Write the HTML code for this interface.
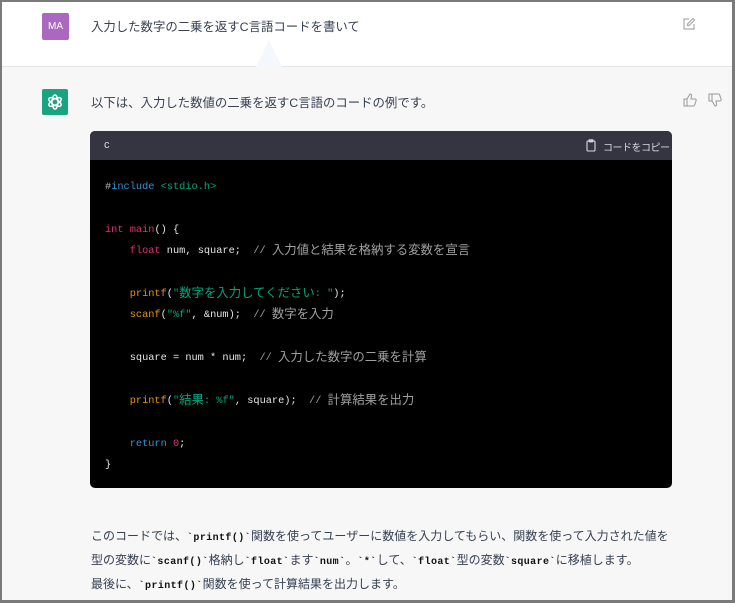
<!DOCTYPE html>
<html><head><meta charset="utf-8"><style>
*{margin:0;padding:0;box-sizing:border-box}
body{width:735px;height:603px;overflow:hidden;background:#fff;font-family:"Liberation Sans","Noto Sans CJK JP",sans-serif;position:relative}
.frame{position:absolute;inset:0;border:2px solid #7a7a7a;border-right-width:3px;border-bottom-width:3px;pointer-events:none;z-index:10}
.top{position:absolute;left:0;top:0;width:735px;height:67px;background:#fff;border-bottom:1px solid #e5e5e5}
.bot{position:absolute;left:0;top:67px;width:735px;height:536px;background:#f7f7f8}
.av{position:absolute;left:42px;top:13px;width:27px;height:27px;background:#ab68c1;color:#fff;font-size:10px;line-height:27px;text-align:center;border-radius:2px}
.gpt{position:absolute;left:42px;top:89px;width:26px;height:26px;background:#19a37e;border-radius:2px}
.t{position:absolute;font-size:12.4px;color:#374151;white-space:nowrap}
.code{position:absolute;left:90px;top:131px;width:582px;height:357px;background:#000;border-radius:5px;overflow:hidden}
.ch{height:29px;background:#343541;color:#d9d9e3;font-size:11px;position:relative}
.pre{position:absolute;left:15px;top:46px;font-family:"Liberation Mono","Noto Sans CJK JP",monospace;font-size:10.3px;line-height:21.4px;color:#e6e6e6;white-space:pre}
.j{font-size:12.4px;line-height:10px;position:relative;top:1px}
.k{color:#df3079}.b{color:#2e95d3}.s{color:#00a67d}.f{color:#e9950c}.c{color:#a0a0a0}.g{color:#b4b4b4}
.p{font-size:12px}
code{font-family:"Liberation Mono",monospace;font-weight:bold;font-size:10px;letter-spacing:0.4px;color:#111}
</style></head><body>
<div class="top"></div><div class="bot"></div>
<div style="position:absolute;left:256px;top:40px;width:0;height:0;border-left:13px solid transparent;border-right:13px solid transparent;border-bottom:27px solid #f4f8fc"></div>
<div class="av">MA</div>
<div class="t" style="left:91px;top:17px">入力した数字の二乗を返すC言語コードを書いて</div>
<svg style="position:absolute;left:682px;top:17px" width="14" height="14" viewBox="0 0 14 14" fill="none" stroke="#aaa" stroke-width="1.2"><path d="M7 2H2v10h10V7"/><path d="M11 1.5l1.5 1.5L7 8.5H5.5V7z"/></svg>
<div class="gpt"><svg width="26" height="26" viewBox="0 0 26 26" fill="none" stroke="#fff" stroke-width="1.4"><g transform="translate(13 13)"><ellipse rx="3" ry="7"/><ellipse rx="3" ry="7" transform="rotate(60)"/><ellipse rx="3" ry="7" transform="rotate(120)"/></g></svg></div>
<div class="t" style="left:91px;top:93px">以下は、入力した数値の二乗を返すC言語のコードの例です。</div>
<svg style="position:absolute;left:683px;top:93px" width="14" height="14" viewBox="0 0 14 14" fill="none" stroke="#999" stroke-width="1"><path d="M1 6h3v7H1zM4 6l3-5c1 0 2 1 1.5 2L8 6h4c1 0 1.5 1 1 2l-1.5 4.5c-.3.5-.7.5-1 .5H4"/></svg>
<svg style="position:absolute;left:708px;top:93px" width="14" height="14" viewBox="0 0 14 14" fill="none" stroke="#999" stroke-width="1"><path d="M1 1h3v7H1zM4 8l3 5c1 0 2-1 1.5-2L8 8h4c1 0 1.5-1 1-2L11.5 1.5C11.2 1 10.8 1 10.5 1H4"/></svg>
<div class="code">
<div class="ch"><span style="position:absolute;left:14px;top:8px">c</span>
<svg style="position:absolute;left:496px;top:8px" width="10" height="13" viewBox="0 0 10 13" fill="none" stroke="#d9d9e3" stroke-width="1.1"><rect x="1" y="2" width="8" height="10" rx="1"/><rect x="3" y="0.8" width="4" height="2" rx=".5"/></svg>
<span style="position:absolute;left:513px;top:8px;font-size:10px;white-space:nowrap;letter-spacing:-0.5px">コードをコピー</span></div>
<div class="pre"><span class="g">#</span><span class="b">include</span> <span class="s">&lt;stdio.h&gt;</span>

<span class="k">int</span> <span class="k">main</span>() {
    <span class="k">float</span> num, square;  <span class="c">// <span class="j">入力値と結果を格納する変数を宣言</span></span>

    <span class="f">printf</span>(<span class="s">"<span class="j">数字を入力してください</span>: "</span>);
    <span class="f">scanf</span>(<span class="s">"%f"</span>, &amp;num);  <span class="c">// <span class="j">数字を入力</span></span>

    square = num * num;  <span class="c">// <span class="j">入力した数字の二乗を計算</span></span>

    <span class="f">printf</span>(<span class="s">"<span class="j">結果</span>: %f"</span>, square);  <span class="c">// <span class="j">計算結果を出力</span></span>

    <span class="b">return</span> <span class="k">0</span>;
}</div>
</div>
<div class="t p" style="left:91px;top:527px">このコードでは、<code>`printf()`</code>関数を使ってユーザーに数値を入力してもらい、関数を使って入力された値を</div>
<div class="t p" style="left:91px;top:551px">型の変数に<code>`scanf()`</code>格納し<code>`float`</code>ます<code>`num`</code>。<code>`*`</code>して、<code>`float`</code>型の変数<code>`square`</code>に移植します。</div>
<div class="t p" style="left:91px;top:575px">最後に、<code>`printf()`</code>関数を使って計算結果を出力します。</div>
<div class="frame"></div>
</body></html>
